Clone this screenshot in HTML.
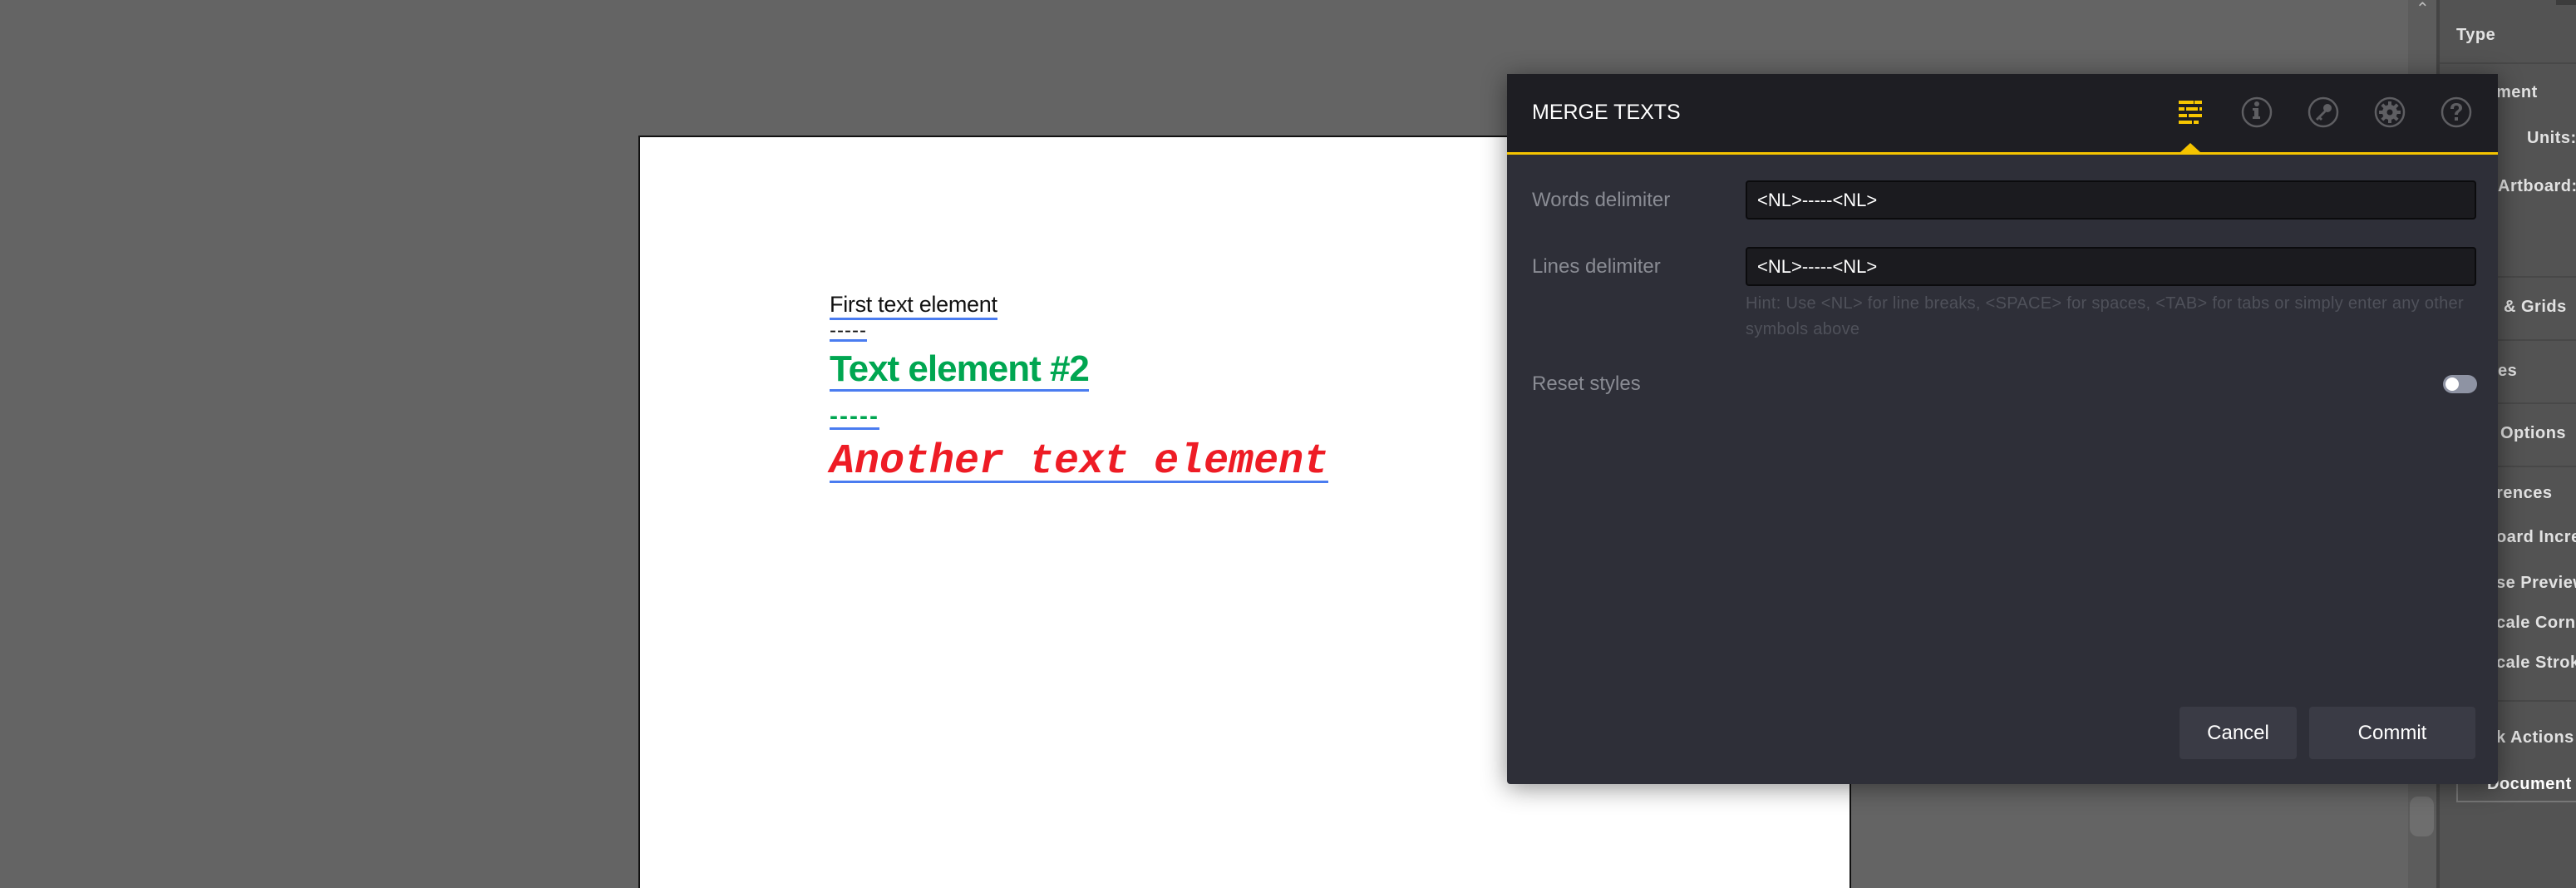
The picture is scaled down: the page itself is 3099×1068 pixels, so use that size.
<!DOCTYPE html>
<html style="overflow:hidden;height:1068px"><head><meta charset="utf-8"><style>
*{margin:0;padding:0;box-sizing:border-box}
body{width:3099px;height:1068px;background:#646464;position:relative;overflow:hidden;font-family:"Liberation Sans",sans-serif}
.a{position:absolute;white-space:nowrap}
.pl{position:absolute;color:#e2e2e2;font-size:20px;font-weight:bold;letter-spacing:0.5px;white-space:nowrap}
.sep{position:absolute;left:2935px;width:164px;height:2px;background:#484848}
</style></head><body>
<!-- artboard -->
<div class="a" style="left:768px;top:163px;width:1459px;height:905px;background:#fff;border:2px solid #111;border-bottom:none"></div>
<div class="a" style="left:998px;top:350px;font-size:27px;color:#111;letter-spacing:-0.3px;line-height:32px;border-bottom:3px solid #4a7cf0">First text element</div>
<div class="a" style="left:998px;top:388px;font-size:24px;color:#111;line-height:20px;border-bottom:3px solid #4a7cf0;letter-spacing:1px">-----</div>
<div class="a" style="left:998px;top:420px;font-size:44px;font-weight:bold;color:#00a651;line-height:48px;border-bottom:3px solid #4a7cf0;letter-spacing:-1px">Text element #2</div>
<div class="a" style="left:998px;top:488px;font-size:30px;font-weight:bold;color:#00a651;line-height:26px;border-bottom:3px solid #4a7cf0;letter-spacing:2px">-----</div>
<div class="a" style="left:998px;top:534px;font-family:'Liberation Mono',monospace;font-style:italic;font-weight:bold;font-size:50px;color:#ee1c25;line-height:44px;border-bottom:3px solid #4a7cf0">Another text element</div>
<!-- scrollbar & right panel -->
<div class="a" style="left:2897px;top:0;width:34px;height:1068px;background:#5c5c5c"></div>
<div class="a" style="left:2906px;top:-2px;color:#bbb;font-size:20px">&#8963;</div>
<div class="a" style="left:2899px;top:958px;width:29px;height:48px;border-radius:10px;background:#6e6e6e"></div>
<div class="a" style="left:2931px;top:0;width:4px;height:1068px;background:#444"></div>
<div class="a" style="left:2935px;top:0;width:164px;height:1068px;background:#535353"></div>
<div class="a" style="left:3075px;top:0;width:24px;height:6px;background:#3c3c3c"></div>
<div class="pl" style="left:2955px;top:31px">Type</div>
<div class="sep" style="top:75px"></div>
<div class="pl" style="left:3003px;top:100px">ment</div>
<div class="pl" style="left:3040px;top:155px">Units:</div>
<div class="pl" style="left:3005px;top:213px">Artboard:</div>
<div class="sep" style="top:332px"></div>
<div class="pl" style="left:3012px;top:358px">&amp; Grids</div>
<div class="sep" style="top:408px"></div>
<div class="pl" style="left:3005px;top:435px">es</div>
<div class="sep" style="top:484px"></div>
<div class="pl" style="left:3008px;top:510px">Options</div>
<div class="sep" style="top:560px"></div>
<div class="pl" style="left:3003px;top:582px">rences</div>
<div class="pl" style="left:3003px;top:635px">oard Incre</div>
<div class="pl" style="left:3003px;top:690px">se Preview</div>
<div class="pl" style="left:3003px;top:738px">cale Corne</div>
<div class="pl" style="left:3003px;top:786px">cale Stroke</div>
<div class="sep" style="top:842px"></div>
<div class="pl" style="left:3003px;top:876px">k Actions</div>
<div class="a" style="left:2955px;top:925px;width:150px;height:40px;border:2px solid #777;border-top:none"></div>
<div class="pl" style="left:2992px;top:932px;color:#fff">Document</div>
<!-- dialog -->
<div class="a" style="left:1813px;top:89px;width:1192px;height:854px;background:#2e2f38;box-shadow:0 4px 30px rgba(0,0,0,.45);border-radius:0 0 4px 4px"></div>
<div class="a" style="left:1813px;top:89px;width:1192px;height:94px;background:#1e1e23"></div>
<div class="a" style="left:1813px;top:183px;width:1192px;height:3px;background:#f5c400"></div>
<div class="a" style="left:2623px;top:172px;width:0;height:0;border-left:12px solid transparent;border-right:12px solid transparent;border-bottom:11px solid #f5c400"></div>
<div class="a" style="left:1843px;top:121px;font-size:25px;color:#fff">MERGE TEXTS</div>
<svg class="a" style="left:2600px;top:110px" width="400" height="50" viewBox="0 0 400 50">
<g fill="#f7c600"><rect x="21" y="11" width="18" height="4"/><rect x="40" y="11" width="9" height="4"/>
<rect x="21" y="19" width="7" height="4"/><rect x="30" y="19" width="14" height="4"/><rect x="46" y="19" width="3" height="4"/>
<rect x="21" y="27" width="10" height="4"/><rect x="33" y="27" width="16" height="4"/>
<rect x="21" y="35" width="16" height="4"/><rect x="39" y="35" width="6" height="4"/></g>
<g fill="none" stroke="#5e5e62" stroke-width="2.5"><circle cx="115" cy="25" r="17"/><circle cx="195" cy="25" r="17"/><circle cx="275" cy="25" r="17"/><circle cx="355" cy="25" r="17"/></g>
<g fill="#5e5e62"><circle cx="115" cy="15" r="3"/><path d="M110 20h7v10h2v3h-9v-3h2v-7h-2z"/>
<circle cx="200" cy="20" r="5"/><path d="M197 22l-11 11 2 2 2-2 2 2 2-2-2-2 6-6z"/>
<circle cx="275" cy="25" r="9"/>
<path d="M348 21c0-5 3-7 7-7s7 2 7 6c0 4-5 4-5 8h-4c0-5 5-5 5-8 0-2-1-3-3-3s-3 1-3 4z"/><rect x="353" y="31" width="4" height="4"/></g>
<g fill="#5e5e62"><rect x="273" y="12" width="4" height="26"/><rect x="262" y="23" width="26" height="4"/>
<rect x="273" y="12" width="4" height="26" transform="rotate(45 275 25)"/><rect x="273" y="12" width="4" height="26" transform="rotate(-45 275 25)"/></g>
<circle cx="275" cy="25" r="3.5" fill="#1e1e23"/>
</svg>
<div class="a" style="left:1843px;top:227px;font-size:24px;color:#8a8c94">Words delimiter</div>
<div class="a" style="left:2100px;top:217px;width:879px;height:47px;background:#1b1b1f;border:2px solid #0b0b0d;border-radius:4px"></div>
<div class="a" style="left:2114px;top:228px;font-size:22px;color:#fff">&lt;NL&gt;-----&lt;NL&gt;</div>
<div class="a" style="left:1843px;top:307px;font-size:24px;color:#8a8c94">Lines delimiter</div>
<div class="a" style="left:2100px;top:297px;width:879px;height:47px;background:#1b1b1f;border:2px solid #0b0b0d;border-radius:4px"></div>
<div class="a" style="left:2114px;top:308px;font-size:22px;color:#fff">&lt;NL&gt;-----&lt;NL&gt;</div>
<div class="a" style="left:2100px;top:350px;font-size:20px;color:#4f515a;line-height:31px;white-space:normal;width:880px;letter-spacing:0.3px">Hint: Use &lt;NL&gt; for line breaks, &lt;SPACE&gt; for spaces, &lt;TAB&gt; for tabs or simply enter any other symbols above</div>
<div class="a" style="left:1843px;top:448px;font-size:24px;color:#8a8c94">Reset styles</div>
<div class="a" style="left:2939px;top:451px;width:41px;height:22px;border-radius:11px;background:#8e93a3"></div>
<div class="a" style="left:2942px;top:454px;width:16px;height:16px;border-radius:8px;background:#fff"></div>
<div class="a" style="left:2622px;top:850px;width:141px;height:63px;background:#3a3b45;border-radius:4px;color:#fff;font-size:24px;text-align:center;line-height:63px">Cancel</div>
<div class="a" style="left:2778px;top:850px;width:200px;height:63px;background:#3a3b45;border-radius:4px;color:#fff;font-size:24px;text-align:center;line-height:63px">Commit</div>
</body></html>
